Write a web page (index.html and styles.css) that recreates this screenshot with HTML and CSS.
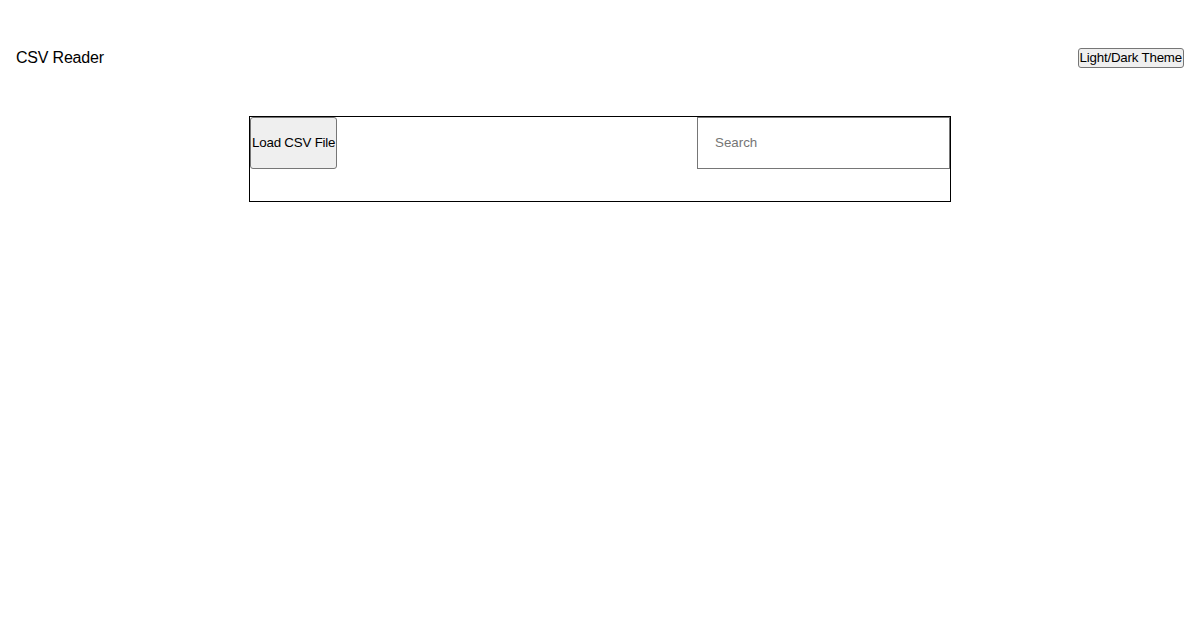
FILE: index.html
```html
<!DOCTYPE html>
<html>
<head>
<meta charset="utf-8">
<title>CSV Reader</title>
<link rel="stylesheet" href="styles.css">
</head>
<body>
<header class="topbar">
  <div class="title">CSV Reader</div>
  <button class="theme-btn">Light/Dark Theme</button>
</header>
<main class="panel">
  <div class="toolbar">
    <button class="load-btn">Load CSV File</button>
    <input class="search" type="text" placeholder="Search">
  </div>
</main>
</body>
</html>
```
FILE: styles.css
```css
html, body {
  margin: 0;
  padding: 0;
  background: #fff;
  font-family: "Liberation Sans", Arial, sans-serif;
  color: #000;
}
.topbar {
  display: flex;
  justify-content: space-between;
  align-items: center;
  padding: 48px 16px;
}
.title {
  font-size: 16px;
  line-height: 18px;
  letter-spacing: -0.2px;
}
button {
  font-family: "Liberation Sans", Arial, sans-serif;
  font-size: 13.33px;
  letter-spacing: -0.2px;
  background: #efefef;
  border: 1px solid #767676;
  border-radius: 3px;
  padding: 0 1px 2px;
  color: #000;
}
.theme-btn {
  height: 20px;
}
.panel {
  width: 700px;
  margin: 0 auto;
  border: 1px solid #000;
  padding-bottom: 32px;
}
.toolbar {
  display: flex;
  justify-content: space-between;
  align-items: stretch;
}
.load-btn {
  height: 52px;
}
.search {
  box-sizing: border-box;
  width: 253px;
  height: 52px;
  padding: 0 17px 2px;
  font-family: "Liberation Sans", Arial, sans-serif;
  font-size: 13.33px;
  border: 1px solid #767676;
  margin: 0;
}
.search::placeholder {
  color: #757575;
}
```
